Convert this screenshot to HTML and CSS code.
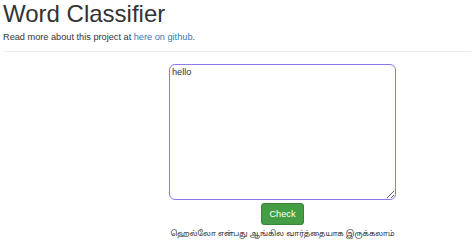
FILE: index.html
```html
<!DOCTYPE html>
<html>
<head>
<meta charset="utf-8">
<link rel="stylesheet" href="styles.css">
</head>
<body>
<div class="page">
  <h1 class="title">Word Classifier</h1>
  <p class="intro">Read more about this project at <a class="link" href="#">here on github</a>.</p>
  <hr class="rule">
  <div class="row">
    <div class="col">
      <textarea class="input">hello</textarea>
      <button class="btn">Check</button>
      <div class="result">ஹெல்லோ என்பது ஆங்கில வார்த்தையாக இருக்கலாம்</div>
    </div>
  </div>
</div>
</body>
</html>
```
FILE: styles.css
```css
html, body {
  margin: 0;
  padding: 0;
  background: #fff;
}
.page {
  font-family: "Liberation Sans", Arial, sans-serif;
  color: #333;
  padding: 0 3px;
}
.title {
  margin: 1px 0 0 0;
  font-size: 24px;
  font-weight: 400;
  line-height: 26px;
}
.intro {
  margin: 4px 0 0 0;
  font-size: 9.2px;
  line-height: 13px;
}
.link {
  color: #337ab7;
  text-decoration: none;
}
.rule {
  border: 0;
  border-top: 1px solid #eee;
  margin: 7px 0 0 0;
}
.row {
  display: flex;
  padding-left: 166px;
  padding-top: 12px;
}
.col {
  width: 227px;
  display: flex;
  flex-direction: column;
  align-items: center;
}
.input {
  box-sizing: border-box;
  width: 227px;
  height: 136px;
  margin: 0;
  padding: 2px 2px;
  border: 1.5px solid #8a78ec;
  border-radius: 6px;
  font-family: "Liberation Sans", Arial, sans-serif;
  font-size: 9.2px;
  color: #333;
  outline: none;
  resize: vertical;
}
.btn {
  margin-top: 3px;
  width: 43px;
  height: 22px;
  padding: 0;
  background: #449d44;
  border: 1px solid #398439;
  border-radius: 3px;
  color: #fff;
  font-family: "Liberation Sans", Arial, sans-serif;
  font-size: 9.2px;
}
.result {
  margin-top: 3px;
  font-size: 7.7px;
  line-height: 12px;
  white-space: nowrap;
  font-family: "Liberation Sans", "Noto Sans Tamil", "Noto Sans", sans-serif;
}
```
